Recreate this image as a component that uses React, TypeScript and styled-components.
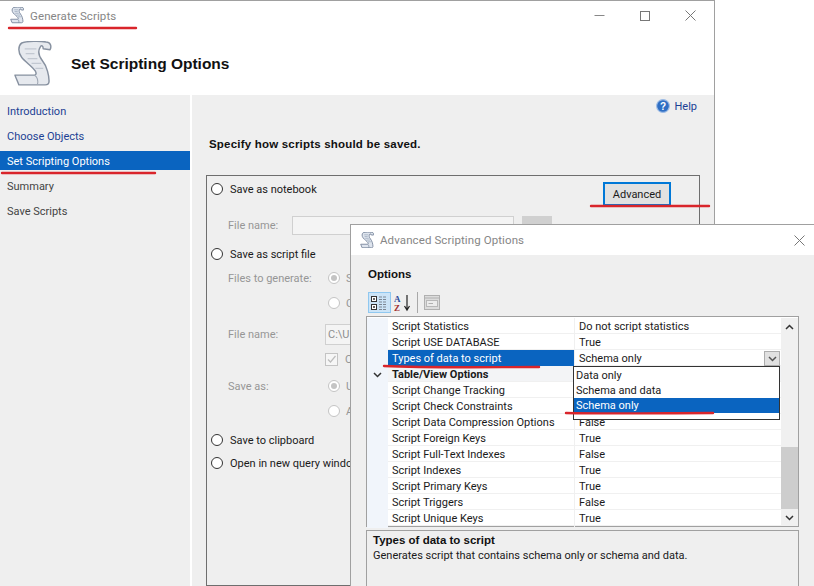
import React from "react";
import styled, { createGlobalStyle } from "styled-components";

const Global = createGlobalStyle`
  *, *::before, *::after { box-sizing: border-box; }
  html, body { margin: 0; padding: 0; background: #fff; }
  body { font-family: Roboto, "Liberation Sans", Arial, sans-serif; font-size: 11px; color: #111; }
`;

const Desktop = styled.div`
  position: relative;
  width: 814px;
  height: 586px;
  overflow: hidden;
  background: #fff;
`;
const MainWindow = styled.div`
  width: 715px;
  height: 586px;
  border-top: 1px solid #a0a0a0;
  border-right: 1px solid #a0a0a0;
  display: flex;
  flex-direction: column;
`;
const TitleBar = styled.div`
  height: 31px;
  flex: none;
  display: flex;
  align-items: center;
  padding: 0 18px 2px 10px;
  background: #fff;
`;
const TitleText = styled.span`
  margin-left: 6px;
  flex: 1;
  font-size: 11.5px;
  color: #868686;
  letter-spacing: 0.1px;
`;
const WinButtons = styled.div`
  display: flex;
  gap: 35px;
  align-items: center;
`;
const Header = styled.div`
  height: 63px;
  flex: none;
  display: flex;
  align-items: center;
  padding: 0 0 0 13px;
  background: #fff;
`;
const HeaderTitle = styled.h1`
  margin: 0 0 0 19px;
  font-family: "Liberation Sans", Arial, sans-serif;
  font-size: 15.5px;
  font-weight: 700;
  color: #111;
`;
const Body = styled.div`
  flex: 1;
  display: flex;
  gap: 2px;
  background: #fff;
`;
const Sidebar = styled.nav`
  width: 190px;
  flex: none;
  padding-top: 6px;
  background: #efefef;
  display: flex;
  flex-direction: column;
  gap: 6px;
`;
const NavItem = styled.div<{ $state: "link" | "active" | "plain" }>`
  height: 19px;
  line-height: 21px;
  padding-left: 7px;
  background: ${(p) => (p.$state === "active" ? "#0a64c0" : "transparent")};
  color: ${(p) => (p.$state === "active" ? "#fff" : p.$state === "link" ? "#1c3f94" : "#444")};
`;
const Panel = styled.main`
  flex: 1;
  background: #efefef;
  padding: 0 14px 0 14px;
  display: flex;
  flex-direction: column;
`;
const HelpRow = styled.div`
  height: 22px;
  display: flex;
  justify-content: flex-end;
  align-items: center;
  gap: 4px;
  padding-right: 3px;
  color: #1c3f94;
`;
const Lead = styled.div`
  margin: 19px 0 0 3px;
  height: 16px;
  line-height: 16px;
  font-family: "Liberation Sans", Arial, sans-serif;
  font-size: 11.5px;
  font-weight: 700;
  color: #111;
  letter-spacing: 0.2px;
`;
const Group = styled.section`
  margin-top: 23px;
  flex: 1;
  border: 1px solid #6e6e6e;
  padding: 4px 4px 0 4px;
  display: flex;
  flex-direction: column;
`;
const Row = styled.div<{ $h: number; $indent?: number }>`
  height: ${(p) => p.$h}px;
  display: flex;
  align-items: center;
  padding-left: ${(p) => p.$indent ?? 0}px;
  flex: none;
`;
const Radio = styled.span<{ $disabled?: boolean; $checked?: boolean }>`
  width: 12px;
  height: 12px;
  flex: none;
  border-radius: 50%;
  background: #fff;
  border: 1px solid ${(p) => (p.$disabled ? "#c4c4c4" : "#333")};
  margin-right: ${(p) => (p.$disabled ? 6 : 7)}px;
  display: inline-flex;
  align-items: center;
  justify-content: center;
  &::after {
    content: "";
    display: ${(p) => (p.$checked ? "block" : "none")};
    width: 6px;
    height: 6px;
    border-radius: 50%;
    background: #c4c4c4;
  }
`;
const RadioLabel = styled.span`
  color: #1a1a1a;
`;
const Muted = styled.span<{ $w?: number }>`
  color: #969696;
  flex: none;
  width: ${(p) => (p.$w ? `${p.$w}px` : "auto")};
`;
const AdvancedButton = styled.button`
  margin: 10px 24px 0 auto;
  width: 68px;
  height: 24px;
  border: 2px solid #0078d7;
  background: #e1e1e1;
  color: #1a1a1a;
  font: inherit;
  padding: 0;
`;
const TextField = styled.div<{ $w: number; $h: number }>`
  width: ${(p) => p.$w}px;
  height: ${(p) => p.$h}px;
  border: 1px solid #d0d0d0;
  background: #f4f4f4;
  color: #8f8f8f;
  padding-left: 2px;
  line-height: 19px;
  flex: none;
`;
const GrayButton = styled.div`
  width: 30px;
  height: 19px;
  margin-left: 8px;
  background: #d0d0d0;
`;
const CheckBox = styled.span`
  width: 13px;
  height: 13px;
  border: 1px solid #c4c4c4;
  background: #f6f6f6;
  margin-right: 7px;
  flex: none;
  display: inline-flex;
`;

const Dialog = styled.div`
  position: absolute;
  left: 350px;
  top: 224px;
  width: 464px;
  height: 362px;
  border: 1px solid #a0a0a0;
  border-right: none;
  border-bottom: none;
  background: #efefef;
  display: flex;
  flex-direction: column;
`;
const DialogTitleBar = styled.div`
  height: 30px;
  flex: none;
  background: #fff;
  display: flex;
  align-items: center;
  padding: 0 9px;
`;
const DialogBody = styled.div`
  flex: 1;
  padding: 0 15px;
  display: flex;
  flex-direction: column;
`;
const OptionsLabel = styled.div`
  margin: 11px 0 0 2px;
  height: 16px;
  line-height: 16px;
  font-family: "Liberation Sans", Arial, sans-serif;
  font-size: 11.5px;
  font-weight: 700;
  color: #111;
`;
const Toolbar = styled.div`
  margin: 9px 0 0 2px;
  height: 23px;
  display: flex;
  align-items: center;
  flex: none;
`;
const ToolButton = styled.div<{ $active?: boolean }>`
  width: 23px;
  height: 21px;
  display: flex;
  align-items: center;
  justify-content: center;
  background: ${(p) => (p.$active ? "#cce4f7" : "transparent")};
  border: 1px solid ${(p) => (p.$active ? "#90c8f0" : "transparent")};
`;
const ToolSep = styled.div`
  width: 1px;
  height: 21px;
  background: #a8a8a8;
  margin: 0 6px 0 3px;
`;
const Grid = styled.div`
  margin-top: 2px;
  height: 211px;
  border: 1px solid #a0a0a0;
  background: #fff;
  flex: none;
  display: flex;
  position: relative;
  padding-top: 1px;
`;
const GridRows = styled.div`
  flex: 1;
  display: flex;
  flex-direction: column;
`;
const GridRow = styled.div<{ $group?: boolean }>`
  height: 16px;
  flex: none;
  display: grid;
  grid-template-columns: 21px 186px 1fr;
  line-height: 18px;
  box-shadow: inset 0 -1px 0 #f0f0f0;
  font-weight: ${(p) => (p.$group ? 700 : 400)};
  background: ${(p) => (p.$group ? "#f3f4f6" : "transparent")};
`;
const Gutter = styled.div`
  background: #f1f5fb;
  display: flex;
  align-items: center;
  justify-content: center;
`;
const NameCell = styled.div<{ $selected?: boolean }>`
  padding-left: 4px;
  white-space: nowrap;
  background: ${(p) => (p.$selected ? "#0a64c0" : "transparent")};
  color: ${(p) => (p.$selected ? "#fff" : "#1a1a1a")};
`;
const ValueCell = styled.div`
  padding-left: 4px;
  border-left: 1px solid #f0f0f0;
  color: #1a1a1a;
  white-space: nowrap;
`;
const Scrollbar = styled.div`
  width: 17px;
  flex: none;
  display: flex;
  flex-direction: column;
  align-items: center;
  background: #f0f0f0;
`;
const ScrollArrow = styled.div`
  height: 17px;
  flex: none;
  display: flex;
  align-items: center;
  justify-content: center;
`;
const ScrollTrack = styled.div`
  flex: 1;
  align-self: stretch;
  padding-top: 112px;
  display: flex;
`;
const ScrollThumb = styled.div`
  flex: 1;
  background: #cdcdcd;
`;
const DropButton = styled.div`
  position: absolute;
  left: 397px;
  top: 34px;
  width: 16px;
  height: 15px;
  background: #e1e1e1;
  border: 1px solid #adadad;
  display: flex;
  align-items: center;
  justify-content: center;
`;
const DropList = styled.div`
  position: absolute;
  left: 206px;
  top: 49px;
  width: 207px;
  height: 54px;
  background: #fff;
  border: 1px solid #333;
  padding-top: 1px;
`;
const DropItem = styled.div<{ $selected?: boolean }>`
  height: 15px;
  line-height: 15px;
  padding-left: 2px;
  background: ${(p) => (p.$selected ? "#0a64c0" : "transparent")};
  color: ${(p) => (p.$selected ? "#fff" : "#1a1a1a")};
`;
const DescBox = styled.div`
  margin-top: 3px;
  flex: 1;
  border: 1px solid #a0a0a0;
  border-bottom: none;
  padding: 2px 6px 0;
  line-height: 15px;
`;
const DescTitle = styled.div`
  font-family: "Liberation Sans", Arial, sans-serif;
  font-size: 11.5px;
  font-weight: 700;
  color: #111;
`;
const DescText = styled.div`
  color: #1a1a1a;
`;
const Annotations = styled.svg`
  position: absolute;
  left: 0;
  top: 0;
  pointer-events: none;
`;

const ScrollIcon = ({ size, small }: { size: number; small?: boolean }) => (
  <svg width={size} height={size * 1.15} viewBox="0 0 40 46" fill="none" style={{ flex: "none" }}>
    <path
      d="M9 2 C14 0 28 0 34 1 C38 1 40 5 38 9 L31 8 C31 5 29 4 28 6 C25 11 26 15 30 20 C35 26 37 36 37 41 C37 44 35 45 33 45 L6 45 C5 42 3 38 2 35 L22 35 C24 35 24 33 23 31 C20 26 13 22 9 17 C5 12 5 5 9 2 Z"
      fill={small ? "#dfe5ee" : "#e6e9ee"}
      stroke={small ? "#7a889e" : "#8791a0"}
      strokeWidth={small ? 2.6 : 1.5}
      strokeLinejoin="round"
    />
    <path
      d="M12 8 H24 M13 13 H22 M15 18 H25 M19 23 H29 M23 28 H31"
      stroke={small ? "#9aa7ba" : "#c2c8d1"}
      strokeWidth={small ? 2 : 1.2}
    />
    <path d="M22 35 C25 37 26 41 25 45" stroke={small ? "#7a889e" : "#a0a8b4"} strokeWidth={small ? 2 : 1.1} />
  </svg>
);
const MinIcon = () => (
  <svg width="11" height="11" viewBox="0 0 11 11"><path d="M0.5 5.5 H10.5" stroke="#888" /></svg>
);
const MaxIcon = () => (
  <svg width="10" height="10" viewBox="0 0 10 10"><rect x="0.5" y="0.5" width="9" height="9" fill="none" stroke="#777" /></svg>
);
const CloseIcon = () => (
  <svg width="11" height="11" viewBox="0 0 11 11"><path d="M0.5 0.5 L10.5 10.5 M10.5 0.5 L0.5 10.5" stroke="#777" /></svg>
);
const HelpIcon = () => (
  <svg width="14" height="14" viewBox="0 0 14 14">
    <circle cx="7" cy="7" r="6.4" fill="#2f6fc4" stroke="#9fbde6" strokeWidth="1.1" />
    <text x="7" y="10.6" textAnchor="middle" fontSize="10" fontWeight="700" fontFamily="Liberation Sans" fill="#fff">?</text>
  </svg>
);
const Chevron = ({ up, color = "#333" }: { up?: boolean; color?: string }) => (
  <svg width="9" height="6" viewBox="0 0 9 6">
    <path d={up ? "M1 5 L4.5 1.5 L8 5" : "M1 1 L4.5 4.5 L8 1"} fill="none" stroke={color} strokeWidth="1.5" />
  </svg>
);
const CategorizedIcon = () => (
  <svg width="17" height="16" viewBox="0 0 17 16">
    <rect x="0.5" y="1.5" width="5" height="5" fill="#fff" stroke="#333" />
    <rect x="0.5" y="9.5" width="5" height="5" fill="#fff" stroke="#333" />
    <path d="M2 4 H4 M3 3 V5 M2 12 H4 M3 11 V13" stroke="#333" />
    <path d="M8 2 H16 M8 4.5 H16 M8 7 H16 M8 9.5 H16 M8 12 H16 M8 14.5 H16" stroke="#7d8794" strokeDasharray="3 1" />
  </svg>
);
const SortIcon = () => (
  <svg width="17" height="18" viewBox="0 0 17 18">
    <text x="0" y="8" fontSize="9" fontWeight="700" fontFamily="Liberation Serif" fill="#2b4a9a">A</text>
    <text x="0" y="17" fontSize="9" fontWeight="700" fontFamily="Liberation Serif" fill="#a03030">Z</text>
    <path d="M13 1 V15 M10.5 12 L13 16 L15.5 12" fill="none" stroke="#222" strokeWidth="1.2" />
  </svg>
);
const PagesIcon = () => (
  <svg width="16" height="15" viewBox="0 0 16 15">
    <rect x="0.5" y="0.5" width="15" height="14" fill="#dcdcdc" stroke="#b0b0b0" />
    <rect x="2.5" y="5.5" width="11" height="6" fill="#ececec" stroke="#b8b8b8" />
    <path d="M1 3 H15" stroke="#b0b0b0" />
    <path d="M4.5 8.5 H9" stroke="#b0b0b0" />
  </svg>
);
const CheckMark = () => (
  <svg width="11" height="11" viewBox="0 0 11 11"><path d="M2 5.5 L4.5 8 L9.5 2" fill="none" stroke="#bdbdbd" strokeWidth="1.2" /></svg>
);

const nav: { label: string; state: "link" | "active" | "plain" }[] = [
  { label: "Introduction", state: "link" },
  { label: "Choose Objects", state: "link" },
  { label: "Set Scripting Options", state: "active" },
  { label: "Summary", state: "plain" },
  { label: "Save Scripts", state: "plain" },
];

const rows: { name: string; value?: string; group?: boolean; selected?: boolean }[] = [
  { name: "Script Statistics", value: "Do not script statistics" },
  { name: "Script USE DATABASE", value: "True" },
  { name: "Types of data to script", value: "Schema only", selected: true },
  { name: "Table/View Options", group: true },
  { name: "Script Change Tracking" },
  { name: "Script Check Constraints" },
  { name: "Script Data Compression Options", value: "False" },
  { name: "Script Foreign Keys", value: "True" },
  { name: "Script Full-Text Indexes", value: "False" },
  { name: "Script Indexes", value: "True" },
  { name: "Script Primary Keys", value: "True" },
  { name: "Script Triggers", value: "False" },
  { name: "Script Unique Keys", value: "True" },
];

export default function App() {
  return (
    <Desktop>
      <Global />
      <MainWindow>
        <TitleBar>
          <ScrollIcon size={14} small />
          <TitleText>Generate Scripts</TitleText>
          <WinButtons>
            <MinIcon />
            <MaxIcon />
            <CloseIcon />
          </WinButtons>
        </TitleBar>
        <Header>
          <ScrollIcon size={39} />
          <HeaderTitle>Set Scripting Options</HeaderTitle>
        </Header>
        <Body>
          <Sidebar>
            {nav.map((n) => (
              <NavItem key={n.label} $state={n.state}>{n.label}</NavItem>
            ))}
          </Sidebar>
          <Panel>
            <HelpRow>
              <HelpIcon />
              <span>Help</span>
            </HelpRow>
            <Lead>Specify how scripts should be saved.</Lead>
            <Group>
              <Row $h={18}>
                <Radio />
                <RadioLabel>Save as notebook</RadioLabel>
                <AdvancedButton>Advanced</AdvancedButton>
              </Row>
              <Row $h={18} />
              <Row $h={19} $indent={17}>
                <Muted $w={64}>File name:</Muted>
                <TextField $w={222} $h={19} />
                <GrayButton />
              </Row>
              <Row $h={10} />
              <Row $h={18}>
                <Radio />
                <RadioLabel>Save as script file</RadioLabel>
              </Row>
              <Row $h={6} />
              <Row $h={18} $indent={17}>
                <Muted $w={100}>Files to generate:</Muted>
                <Radio $disabled $checked />
                <Muted>S</Muted>
              </Row>
              <Row $h={7} />
              <Row $h={18} $indent={117}>
                <Radio $disabled />
                <Muted>C</Muted>
              </Row>
              <Row $h={12} />
              <Row $h={21} $indent={17}>
                <Muted $w={97}>File name:</Muted>
                <TextField $w={60} $h={21}>C:\U</TextField>
              </Row>
              <Row $h={5} />
              <Row $h={18} $indent={114}>
                <CheckBox><CheckMark /></CheckBox>
                <Muted>O</Muted>
              </Row>
              <Row $h={9} />
              <Row $h={18} $indent={17}>
                <Muted $w={100}>Save as:</Muted>
                <Radio $disabled $checked />
                <Muted>U</Muted>
              </Row>
              <Row $h={7} />
              <Row $h={18} $indent={117}>
                <Radio $disabled />
                <Muted>A</Muted>
              </Row>
              <Row $h={11} />
              <Row $h={18}>
                <Radio />
                <RadioLabel>Save to clipboard</RadioLabel>
              </Row>
              <Row $h={5} />
              <Row $h={18}>
                <Radio />
                <RadioLabel>Open in new query window</RadioLabel>
              </Row>
            </Group>
          </Panel>
        </Body>
      </MainWindow>

      <Dialog>
        <DialogTitleBar>
          <ScrollIcon size={14} small />
          <TitleText>Advanced Scripting Options</TitleText>
          <CloseIcon />
        </DialogTitleBar>
        <DialogBody>
          <OptionsLabel>Options</OptionsLabel>
          <Toolbar>
            <ToolButton $active><CategorizedIcon /></ToolButton>
            <ToolButton><SortIcon /></ToolButton>
            <ToolSep />
            <PagesIcon />
          </Toolbar>
          <Grid>
            <GridRows>
              {rows.map((r) => (
                <GridRow key={r.name} $group={r.group}>
                  <Gutter>{r.group && <Chevron />}</Gutter>
                  <NameCell $selected={r.selected}>{r.name}</NameCell>
                  <ValueCell>{r.value}</ValueCell>
                </GridRow>
              ))}
            </GridRows>
            <Scrollbar>
              <ScrollArrow><Chevron up /></ScrollArrow>
              <ScrollTrack><ScrollThumb /></ScrollTrack>
              <ScrollArrow><Chevron /></ScrollArrow>
            </Scrollbar>
            <DropButton><Chevron color="#555" /></DropButton>
            <DropList>
              <DropItem>Data only</DropItem>
              <DropItem>Schema and data</DropItem>
              <DropItem $selected>Schema only</DropItem>
            </DropList>
          </Grid>
          <DescBox>
            <DescTitle>Types of data to script</DescTitle>
            <DescText>Generates script that contains schema only or schema and data.</DescText>
          </DescBox>
        </DialogBody>
      </Dialog>

      <Annotations width="814" height="586" viewBox="0 0 814 586" fill="none" stroke="#d9252b" strokeWidth="2.4" strokeLinecap="round">
        <path d="M9 28 H136" />
        <path d="M2 173 L155 173" />
        <path d="M591 206 H709" />
        <path d="M384 366 C430 368 490 367 539 367" />
        <path d="M566 413 C610 414 670 413 713 413" />
      </Annotations>
    </Desktop>
  );
}
